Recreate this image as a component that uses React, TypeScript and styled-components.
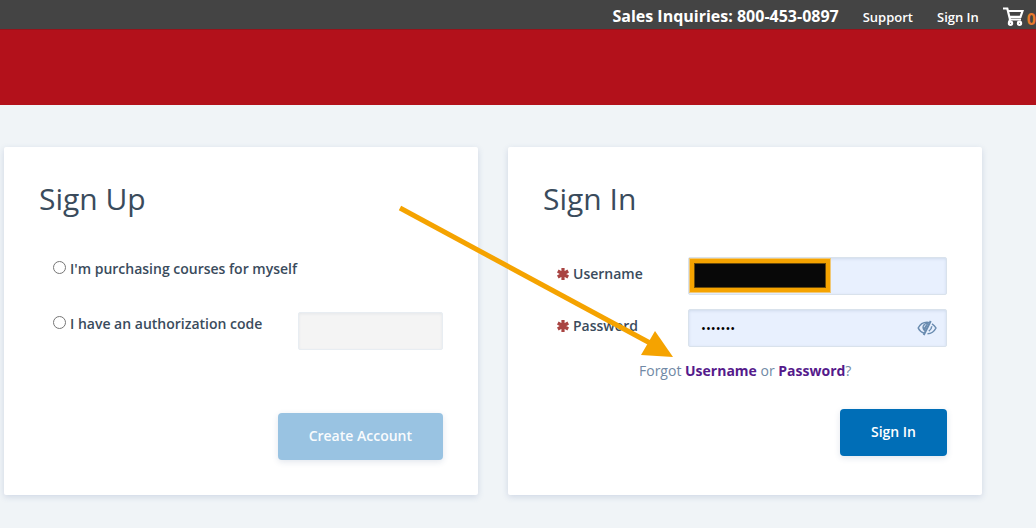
import React from "react";
import styled, { createGlobalStyle } from "styled-components";

const GlobalStyle = createGlobalStyle`
  *, *::before, *::after { box-sizing: border-box; }
  body {
    margin: 0;
    background: #f0f4f7;
    color: #3a4b5c;
    font-family: "Open Sans", "Liberation Sans", sans-serif;
    font-size: 14px;
    overflow-x: hidden;
  }
`;

const TopBar = styled.nav`
  display: flex;
  justify-content: flex-end;
  align-items: baseline;
  gap: 24px;
  height: 29px;
  padding-top: 4px;
  background: #444;
  color: #fff;
`;

const Phone = styled.span`
  font-size: 16px;
  font-weight: 700;
  line-height: 24px;
`;

const TopLink = styled.a`
  color: #fff;
  font-size: 13px;
  font-weight: 600;
  line-height: 24px;
  text-decoration: none;
`;

const CartLink = styled.a`
  display: flex;
  align-items: center;
  align-self: center;
  gap: 3px;
  color: #e87a2c;
  font-size: 16px;
  font-weight: 700;
  line-height: 24px;
  text-decoration: none;
`;

const CartCount = styled.span`
  padding-top: 4px;
`;

const Banner = styled.header`
  height: 76px;
  background: #b3111b;
  border-top: 1px solid #96131b;
`;

const Main = styled.main`
  display: grid;
  grid-template-columns: 1fr 1fr;
  gap: 30px;
  padding: 42px 54px 33px 4px;
`;

const Card = styled.section`
  position: relative;
  padding: 35px;
  background: #fff;
  border-radius: 2px;
  box-shadow: 0 2px 6px rgba(60, 90, 150, 0.18);
`;

const Title = styled.h1`
  margin: 0 0 41px;
  font-size: 30px;
  font-weight: 400;
  line-height: 34px;
`;

const Form = styled.form`
  display: flex;
  flex-direction: column;
`;

const ChoiceRow = styled.div`
  display: flex;
  justify-content: space-between;
  align-items: flex-start;
  margin-bottom: 31px;
  padding-left: 14px;
`;

const Choice = styled.label`
  display: flex;
  align-items: flex-start;
  gap: 4px;
  font-weight: 600;
  line-height: 24px;
`;

const Radio = styled.input`
  width: 13px;
  height: 13px;
  margin: 4px 0 0;
`;

const TextInput = styled.input`
  width: 100%;
  height: 38px;
  padding: 0 12px;
  border: 1px solid #d9e2ec;
  border-radius: 2px;
  background: #e8f0fe;
  box-shadow: inset 0 1px 3px rgba(60, 90, 130, 0.14);
  color: #000;
  font-family: inherit;
  font-size: 14px;
`;

const PasswordInput = styled(TextInput)`
  font-size: 13px;
`;

const CodeInput = styled(TextInput)`
  width: 145px;
  border-color: #e8edf2;
  background: #f4f4f4;
  box-shadow: inset 0 1px 3px rgba(60, 90, 130, 0.08);
`;

const Field = styled.div`
  display: grid;
  grid-template-columns: 1fr 259px;
  align-items: center;
  margin-bottom: 14px;
`;

const FieldLabel = styled.label`
  display: flex;
  align-items: center;
  gap: 4px;
  padding: 0 0 4px 14px;
  font-weight: 600;
  line-height: 20px;
`;

const InputWrap = styled.div`
  position: relative;
`;

const Redaction = styled.span`
  position: absolute;
  top: 1px;
  left: 1px;
  width: 142px;
  height: 35px;
  border: 5px solid #f5a300;
  outline: 1px solid #f0c877;
  outline-offset: -1px;
  background: #080808;
  box-shadow: inset 0 0 0 1px #6b4a08;
`;

const RevealButton = styled.button`
  position: absolute;
  top: 9px;
  right: 10px;
  display: flex;
  padding: 0;
  border: 0;
  background: none;
  color: #6a8cb0;
`;

const Forgot = styled.p`
  margin: 0 0 28px 96px;
  color: #7189a5;
  line-height: 20px;
`;

const ForgotLink = styled.a`
  color: #551a8b;
  font-weight: 700;
  text-decoration: none;
`;

const Submit = styled.button<{ $muted?: boolean }>`
  align-self: flex-end;
  height: 47px;
  margin-top: ${(p) => (p.$muted ? "32px" : "0")};
  padding: 0 31px 2px;
  border: 0;
  border-radius: 4px;
  background: ${(p) => (p.$muted ? "#99c3e2" : "#006eb7")};
  box-shadow: 0 2px 6px rgba(50, 80, 130, 0.14);
  color: ${(p) => (p.$muted ? "#f8fbfd" : "#fff")};
  font-family: inherit;
  font-size: 14px;
  font-weight: 600;
`;

const Pointer = styled.svg`
  position: absolute;
  top: 56px;
  left: -112px;
  pointer-events: none;
`;

function CartIcon() {
  return (
    <svg width="21" height="20" viewBox="0 0 21 20" fill="none" stroke="#fff" strokeWidth="2.200" aria-hidden="true">
      <path d="M0 1.500H4.300L7 12.500H18M5 4H19.500L17.500 9.800H7" />
      <path d="M7 12.500L6 15.500" />
      <circle cx="7.500" cy="16.200" r="1.600" />
      <circle cx="16.500" cy="16.200" r="1.600" />
    </svg>
  );
}

function RequiredMark() {
  return (
    <svg width="12" height="12" viewBox="0 0 12 12" stroke="#a94442" strokeWidth="3.200" aria-hidden="true">
      <path d="M6 0V12M0.800 3L11.200 9M0.800 9L11.200 3" />
    </svg>
  );
}

function EyeClosedIcon() {
  return (
    <svg width="20" height="20" viewBox="0 0 20 20" fill="none" stroke="currentColor" strokeWidth="1.500" aria-hidden="true">
      <path d="M7.200 15.200C4.200 14.300 2.100 12 1.200 10C2.800 6.800 6 4.300 10 4.300C11 4.300 12 4.500 12.800 4.700" />
      <path d="M15 5.800C16.900 6.900 18.200 8.500 19 10C17.300 13.300 14 15.600 10.500 15.700" />
      <path d="M13.700 3L6.700 17" strokeWidth="2" />
      <path d="M14.800 8.300C14.600 10.600 13.500 12.200 11.800 13.200" />
      <path d="M11.800 4.700C8 4.300 5.400 6.200 5.400 9.200C5.400 11.200 6.300 12.600 7.700 13.300Z" fill="currentColor" stroke="none" />
      <path d="M7.300 9.200C7.300 7.800 8 7 9.200 6.600" stroke="#e8f0fe" strokeWidth="1" />
    </svg>
  );
}

export default function App() {
  return (
    <>
      <GlobalStyle />
      <TopBar>
        <Phone>Sales Inquiries: 800-453-0897</Phone>
        <TopLink href="#support">Support</TopLink>
        <TopLink href="#signin">Sign In</TopLink>
        <CartLink href="#cart" aria-label="Cart, 0 items">
          <CartIcon />
          <CartCount>0</CartCount>
        </CartLink>
      </TopBar>
      <Banner />
      <Main>
        <Card>
          <Title>Sign Up</Title>
          <Form>
            <ChoiceRow>
              <Choice>
                <Radio type="radio" name="signup" />
                I'm purchasing courses for myself
              </Choice>
            </ChoiceRow>
            <ChoiceRow>
              <Choice>
                <Radio type="radio" name="signup" />
                I have an authorization code
              </Choice>
              <CodeInput type="text" aria-label="Authorization code" disabled />
            </ChoiceRow>
            <Submit type="button" $muted disabled>
              Create Account
            </Submit>
          </Form>
        </Card>
        <Card id="signin">
          <Title>Sign In</Title>
          <Form>
            <Field>
              <FieldLabel htmlFor="username">
                <RequiredMark />
                Username
              </FieldLabel>
              <InputWrap>
                <TextInput id="username" type="text" />
                <Redaction />
              </InputWrap>
            </Field>
            <Field>
              <FieldLabel htmlFor="password">
                <RequiredMark />
                Password
              </FieldLabel>
              <InputWrap>
                <PasswordInput id="password" type="password" defaultValue="secret1" />
                <RevealButton type="button" aria-label="Show password">
                  <EyeClosedIcon />
                </RevealButton>
              </InputWrap>
            </Field>
            <Forgot>
              Forgot <ForgotLink href="#username">Username</ForgotLink> or{" "}
              <ForgotLink href="#password">Password</ForgotLink>?
            </Forgot>
            <Submit type="button">Sign In</Submit>
          </Form>
          <Pointer width="280" height="160" viewBox="0 0 280 160" aria-hidden="true">
            <path d="M4 5L254 140" stroke="#f5a300" strokeWidth="5" />
            <path d="M259 128L277 154L245 152Z" fill="#f5a300" />
          </Pointer>
        </Card>
      </Main>
    </>
  );
}
